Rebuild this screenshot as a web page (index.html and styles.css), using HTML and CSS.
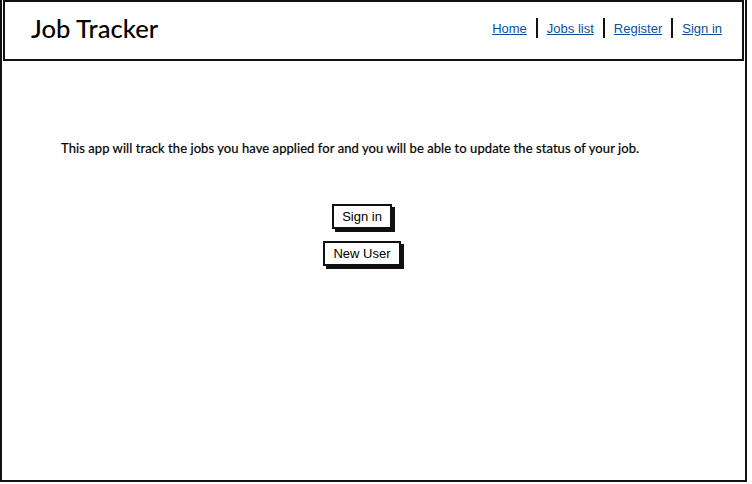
FILE: index.html
```html
<!DOCTYPE html>
<html>
<head>
<meta charset="utf-8">
<link rel="stylesheet" href="styles.css">
</head>
<body>
<div class="frame">
  <header class="header">
    <div class="title">Job Tracker</div>
    <nav class="nav">
      <a href="#">Home</a>
      <span class="sep"></span>
      <a href="#">Jobs list</a>
      <span class="sep"></span>
      <a href="#">Register</a>
      <span class="sep"></span>
      <a href="#">Sign in</a>
    </nav>
  </header>
  <main class="main">
    <p class="intro">This app will track the jobs you have applied for and you will be able to update the status of your job.</p>
    <div class="actions">
      <button class="btn">Sign in</button>
      <button class="btn">New User</button>
    </div>
  </main>
</div>
</body>
</html>
```
FILE: styles.css
```css
html, body {
  margin: 0;
  padding: 0;
  background: #fff;
}
.frame {
  box-sizing: border-box;
  width: 747px;
  height: 482px;
  border: 2px solid #111;
  border-top: none;
  display: flex;
  flex-direction: column;
}
.header {
  box-sizing: border-box;
  height: 61px;
  margin: 0 1px;
  border: 2px solid #111;
  display: flex;
  align-items: center;
  justify-content: space-between;
  padding: 0 20px 0 26px;
}
.title {
  font-family: Lato, "Liberation Sans", sans-serif;
  font-size: 25.6px;
  font-weight: 500;
  color: #000;
  padding-bottom: 5px;
}
.nav {
  display: flex;
  align-items: center;
  gap: 9px;
  padding-bottom: 5px;
}
.nav a {
  font-family: "Liberation Sans", Arial, sans-serif;
  font-size: 13px;
  color: #0b4f9c;
  text-decoration: underline;
}
.sep {
  display: block;
  width: 2px;
  height: 20px;
  background: #111;
}
.main {
  display: flex;
  flex-direction: column;
}
.intro {
  margin: 79px 0 0 59px;
  font-family: Lato, "Liberation Sans", sans-serif;
  font-size: 13px;
  letter-spacing: 0.07px;
  color: #000;
  -webkit-text-stroke: 0.2px #000;
}
.actions {
  display: flex;
  flex-direction: column;
  align-items: center;
  gap: 12px;
  padding-right: 23px;
  margin-top: 48px;
}
.btn {
  box-sizing: border-box;
  font-family: "Liberation Sans", Arial, sans-serif;
  font-size: 13px;
  color: #000;
  background: #fff;
  border: 2px solid #111;
  border-radius: 0;
  height: 25px;
  padding: 0 8px;
  box-shadow: 3px 3px 0 #111;
  line-height: 19px;
}
```
